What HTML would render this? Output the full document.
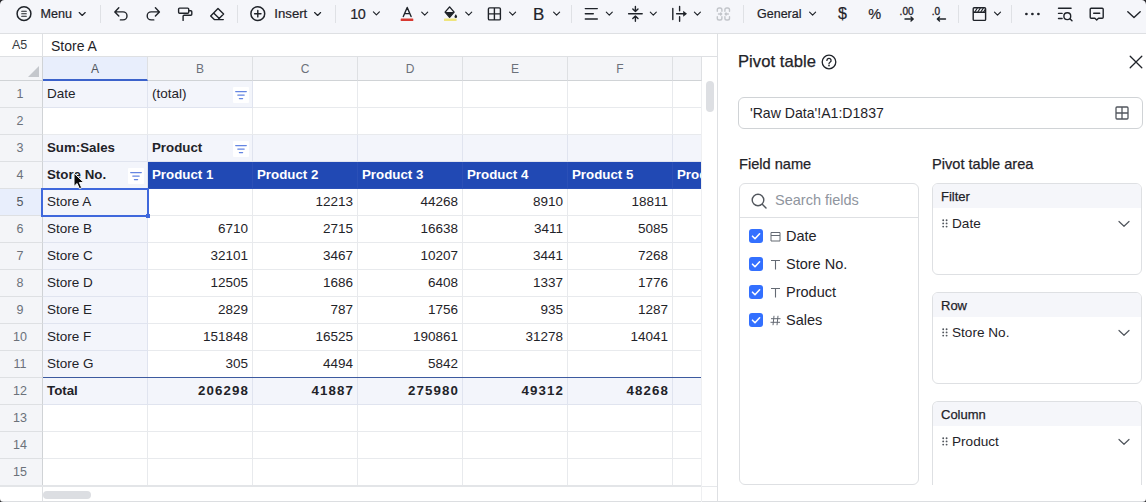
<!DOCTYPE html>
<html><head><meta charset="utf-8"><title>Pivot table</title>
<style>
*{box-sizing:border-box;margin:0;padding:0}
html,body{width:1146px;height:502px;overflow:hidden;background:#fff}
body{font-family:"Liberation Sans",sans-serif;color:#1f2329;position:relative}
#tb{position:absolute;left:0;top:0;width:1146px;height:34px;background:#f5f6fa;border-bottom:1px solid #dee0e3}
#tb svg{position:absolute;overflow:visible}
#tb .t{position:absolute;top:0;height:28px;line-height:28px;font-size:13.5px;color:#1f2329;white-space:nowrap;-webkit-text-stroke:0.200px #1f2329}
#tb .sep{position:absolute;top:5px;width:1px;height:18px;background:#dfe1e5}
.chev{stroke:#1f2329;stroke-width:1.150;fill:none;stroke-linecap:round;stroke-linejoin:round}
.ic{stroke:#1f2329;stroke-width:1.4;fill:none;stroke-linecap:round;stroke-linejoin:round}
#fx{position:absolute;left:0;top:34px;width:717px;height:23px;background:#fff;border-bottom:1px solid #dee0e3}
#fx .nm{position:absolute;left:0;top:0;width:42px;height:22px;line-height:22px;font-size:12.500px;color:#373c43;padding-left:12px}
#fx .vl{position:absolute;left:42px;top:0;width:1px;height:22px;background:#dee0e3}
#fx .tx{position:absolute;left:51px;top:0;height:22px;line-height:24px;font-size:14px;color:#1f2329}
#grid{position:absolute;left:0;top:0;width:702px;height:486px;overflow:hidden}
.ch{position:absolute;top:57px;height:24px;background:#f4f5f8;border-right:1px solid #dee0e3;border-bottom:1px solid #d0d3d6;font-size:12px;color:#6b717a;text-align:center;line-height:25px}
.ch.sel{background:#e8eefc;border-bottom:2px solid #3b62cb;color:#51565d}
.rh{position:absolute;left:0;width:43px;height:27px;background:#f4f5f8;border-right:1px solid #d0d3d6;border-bottom:1px solid #dee0e3;font-size:12.500px;color:#6b717a;text-align:center;line-height:27px;padding-right:2px}
.rh.sel{background:#e8eefc;color:#51565d}
.c{position:absolute;height:27px;border-right:1px solid #e8eaed;border-bottom:1px solid #e8eaed;font-size:13.5px;line-height:26px;padding:0 4px;white-space:nowrap;overflow:hidden;background:#fff;color:#1f2329}
.c.r{text-align:right;padding-right:4px}
.c.pv{background:#f3f5fb;border-color:#e0e4ef}
.c.b{font-weight:bold;font-size:13.300px}
.c.b.r{letter-spacing:1.100px;padding-right:3px}
.c.hd{background:#2149b4;color:#fff;font-weight:bold;font-size:13.300px;border-color:#2b50b7}
.corner{position:absolute;left:0;top:57px;width:43px;height:24px;background:#f4f5f8;border-right:1px solid #d0d3d6;border-bottom:1px solid #d0d3d6}
.corner i{position:absolute;left:27.500px;top:9px;width:0;height:0;border-left:11.500px solid transparent;border-bottom:11.500px solid #c4c7cc}
.selbox{position:absolute;left:41px;top:188px;width:108px;height:29px;border:2px solid #3f68dc}
.selh{position:absolute;left:146px;top:214px;width:4px;height:4px;background:#3f68dc;box-sizing:content-box}
.totline{position:absolute;left:43px;top:377px;width:659px;height:1px;background:#3c5a9f}
.fic{position:absolute;width:16px;height:16px;background:#fff;border-radius:1px}
.fic svg{position:absolute;left:0;top:0}
#vs{position:absolute;left:701px;top:81px;width:16px;height:421px;background:#fff;border-left:1px solid #eeeff1}
#vs i{position:absolute;left:4px;top:0;width:8px;height:31px;border-radius:4px;background:#dddfe3}
#hs{position:absolute;left:0;top:485px;width:701px;height:17px;background:#fff;border-top:2px solid #e3e5e8;border-bottom:1px solid #dcdee1}
#hs b{position:absolute;left:42px;top:0;width:1px;height:14px;background:#dee0e3}
#hs i{position:absolute;left:43px;top:4px;width:48px;height:8px;border-radius:4px;background:#dcdee2}
#pn{position:absolute;left:717px;top:34px;width:429px;height:468px;background:#fff;border-left:1px solid #dee0e3}
#pn .ttl{position:absolute;left:20px;top:17px;font-size:16.600px;line-height:22px;color:#1f2329;-webkit-text-stroke:0.250px #1f2329;letter-spacing:0.050px}
#pn .inp{position:absolute;left:20px;top:63px;width:405px;height:32px;border:1px solid #d0d3d6;border-radius:6px;font-size:14.100px;line-height:30px;padding-left:11px;color:#1f2329}
#pn .h{position:absolute;top:119px;font-size:14.600px;line-height:22px;color:#1f2329;-webkit-text-stroke:0.250px #1f2329}
.fbox{position:absolute;left:21px;top:149px;width:180px;height:302px;border:1px solid #dee0e3;border-radius:6px}
.fbox .srch{position:absolute;left:0;top:0;width:178px;height:34px;border-bottom:1px solid #dee0e3;font-size:14.500px;line-height:33px;color:#8f959e;padding-left:35px}
.fi{position:absolute;left:0;width:178px;height:28px;font-size:14.500px;line-height:28px;color:#1f2329;padding-left:46px}
.cb{position:absolute;left:9px;top:7px;width:14px;height:14px;border-radius:3px;background:#3370ff}
.cb svg{position:absolute;left:0;top:0}
.abox{position:absolute;left:214px;width:210px;height:92px;border:1px solid #dee0e3;border-radius:6px;overflow:hidden}
.abox .ah{position:absolute;left:0;top:0;width:208px;height:24px;background:#f5f6fa;font-size:13px;line-height:25px;padding-left:8px;color:#1f2329;-webkit-text-stroke:0.250px #1f2329}
.abox .ai{position:absolute;left:19px;top:28.500px;font-size:13.600px;line-height:22px;color:#1f2329}
.abox svg{position:absolute}
</style></head><body>
<div id="tb">
<svg width="1146" height="34" viewBox="0 0 1146 34" style="left:0;top:0">
<!-- menu -->
<g class="ic"><circle cx="24" cy="13.700" r="6.900" stroke-width="1.500"/><path d="M21.700 11.300h4.600M21.700 13.800h4.600M21.700 16.200h4.600" stroke-width="1.100"/></g>
<path class="chev" d="M79 12.3m.2.200l3 3 3-3"/>
<!-- undo -->
<path class="ic" d="M118.8 7.700l-4 4.200 4 4.200M115 11.900h8a4 4 0 0 1 0 8h-2.600"/>
<!-- redo -->
<path class="ic" d="M155.400 7.700l4 4.200-4 4.200M159.200 11.900h-8a4 4 0 0 0 0 8h2.600"/>
<!-- paint format -->
<path class="ic" d="M179.600 8.100h8.100a1 1 0 0 1 1 1v3.100a1 1 0 0 1-1 1h-8.100a1 1 0 0 1-1-1v-3.100a1 1 0 0 1 1-1zM188.700 10.700h2.100a1 1 0 0 1 1 1v2.500a1 1 0 0 1-1 1h-6.700a1 1 0 0 0-1 1v4.200"/>
<!-- eraser -->
<path class="ic" d="M218 8.500l5.600 5.500-5.500 5.600h-3.800l-3.600-3.600zM213.600 12.900l5.700 5.600M214.300 19.600h9"/>
<!-- insert -->
<g class="ic"><circle cx="257.800" cy="13.700" r="6.900" stroke-width="1.500"/><path d="M254.6 13.7h6.4M257.8 10.5v6.4"/></g>
<path class="chev" d="M314.4 12.3m.2.200l3 3 3-3"/>
<path class="chev" d="M373.2 11.6m.2.200l3 3 3-3"/>
<!-- font colour -->
<path class="ic" d="M403.3 16.6l3.9-9.2 3.9 9.2M404.6 13.6h5.2" stroke-width="1.3"/>
<rect x="400.7" y="18.4" width="12.6" height="2.6" rx="0.6" fill="#d83931"/>
<path class="chev" d="M421.5 12m.2.200l3 3 3-3"/>
<!-- fill -->
<path class="ic" d="M449.600 6.900l4.500 5.200-4.500 5.200-4.500-5.200z" stroke-width="1.300"/><path d="M445.300 12.100h8.600l-4.300 5z" fill="#1f2329"/><path d="M455.800 14.200c.9 1.200 1.300 1.900 1.300 2.500a1.300 1.300 0 0 1-2.600 0c0-.6.400-1.300 1.300-2.500z" fill="#1f2329"/>
<rect x="444" y="18.4" width="12.6" height="2.6" rx="0.6" fill="#efe57e"/>
<path class="chev" d="M465.5 12m.2.200l3 3 3-3"/>
<!-- borders -->
<path class="ic" d="M489.600 7.900h9.600a1.200 1.200 0 0 1 1.200 1.200v9.600a1.200 1.200 0 0 1-1.200 1.200h-9.600a1.200 1.200 0 0 1-1.200-1.200v-9.600a1.200 1.200 0 0 1 1.200-1.200zM494.400 7.900v12M488.400 13.900h12" stroke-width="1.3"/>
<path class="chev" d="M509.400 12m.2.200l3 3 3-3"/>
<path class="chev" d="M553.400 12m.2.200l3 3 3-3"/>
<!-- align -->
<path class="ic" d="M585.300 8.600h12M585.300 13.800h8M585.300 19h12"/>
<path class="chev" d="M606.100 12m.2.200l3 3 3-3"/>
<!-- valign -->
<path class="ic" d="M628.600 13.800h13.600M635.400 6.400v5.200M632.800 9l2.600 2.600 2.600-2.600M635.400 21.200v-5.200M632.800 18.600l2.600-2.600 2.600 2.600" stroke-width="1.3"/>
<path class="chev" d="M650.100 12m.2.200l3 3 3-3"/>
<!-- wrap -->
<path class="ic" d="M672.800 8.400v11.200M679.600 6.400v4.400M679.600 16.800v4.400M676.600 13.800h8" stroke-width="1.3"/><path d="M683.200 10.800l3.800 3-3.800 3z" fill="#1f2329"/>
<path class="chev" d="M694.200 12m.2.200l3 3 3-3"/>
<!-- merge disabled -->
<g fill="none" stroke="#c2c5ca" stroke-width="1.400" stroke-linecap="round" stroke-linejoin="round"><path d="M717.300 11.300v-1.500a1.800 1.800 0 0 1 1.800-1.800h1a1.800 1.800 0 0 1 1.800 1.800v1.500M724.900 11.300v-1.500a1.800 1.800 0 0 1 1.800-1.800h1a1.800 1.800 0 0 1 1.800 1.800v1.500M717.300 16.700v1.500a1.800 1.800 0 0 0 1.800 1.800h1a1.800 1.800 0 0 0 1.800-1.800v-1.500M724.900 16.700v1.500a1.800 1.800 0 0 0 1.800 1.800h1a1.800 1.800 0 0 0 1.800-1.800v-1.500M718.500 14h3.200M728.300 14h-3.200M720.700 13l1 1-1 1M726.100 13l-1 1 1 1" /></g>
<path class="chev" d="M809.400 12m.2.200l3 3 3-3"/>
<!-- decimal arrows -->
<path class="ic" d="M905 19h8M911 17l2.200 2-2.200 2" stroke-width="1.500"/>
<path class="ic" d="M945.500 19h-8M939.500 17l-2.200 2 2.200 2" stroke-width="1.500"/>
<!-- format -->
<path class="ic" d="M974.200 7.800h10.400a1 1 0 0 1 1 1v10.600a1 1 0 0 1-1 1h-10.400a1 1 0 0 1-1-1v-10.600a1 1 0 0 1 1-1zM973.200 12.300h12.400" stroke-width="1.300"/>
<path d="M974.800 12l2.600-4M977.800 12l2.600-4M980.800 12l2.600-4M983.600 12l1.800-2.800" stroke="#1f2329" stroke-width="1.200" fill="none"/>
<path class="chev" d="M994.300 12m.2.200l3 3 3-3"/>
<!-- dots -->
<circle cx="1026.400" cy="14" r="1.350" fill="#1f2329"/><circle cx="1032.400" cy="14" r="1.350" fill="#1f2329"/><circle cx="1038.400" cy="14" r="1.350" fill="#1f2329"/>
<!-- find -->
<path class="ic" d="M1058.500 8.300h12.600M1058.500 13.400h3.600M1058.500 18.500h3.600M1070.200 19l1.800 1.800" stroke-width="1.300"/><circle class="ic" cx="1067.300" cy="16.200" r="3.400" stroke-width="1.300"/>
<!-- comment -->
<path class="ic" d="M1091.200 8.300h11a1 1 0 0 1 1 1v8a1 1 0 0 1-1 1h-3.700l-1.800 1.700-1.800-1.700h-3.700a1 1 0 0 1-1-1v-8a1 1 0 0 1 1-1zM1093.700 13.300h6" stroke-width="1.300"/>
<!-- chevron big -->
<path class="ic" d="M1127.800 11.800l6.200 5.800 6.200-5.800" stroke-width="1.300"/>
</svg>
<div class="t" style="left:40.500px;font-size:12.600px;top:0px">Menu</div>
<div class="t" style="left:274.300px;font-size:13.200px;top:0px">Insert</div>
<div class="t" style="left:350.300px;font-size:14.400px;letter-spacing:-0.600px;top:0px">10</div>
<div class="t" style="left:533px;font-size:17px;top:1px">B</div>
<div class="t" style="left:757px;font-size:12.500px;top:0px">General</div>
<div class="t" style="left:838px;font-size:16px;top:0">$</div>
<div class="t" style="left:868.300px;font-size:14.500px;top:0px">%</div>
<div class="t" style="left:899.500px;font-size:10px;top:-2.500px;letter-spacing:0.100px;-webkit-text-stroke:0.300px #1f2329">.00</div>
<div class="t" style="left:931.800px;font-size:10px;top:-2.500px;-webkit-text-stroke:0.300px #1f2329">.0</div>
<div class="sep" style="left:100px"></div>
<div class="sep" style="left:237px"></div>
<div class="sep" style="left:335px"></div>
<div class="sep" style="left:571px"></div>
<div class="sep" style="left:743px"></div>
<div class="sep" style="left:958px"></div>
<div class="sep" style="left:1011px"></div>
</div>
<div id="fx"><div class="nm">A5</div><div class="vl"></div><div class="tx">Store A</div></div>
<div id="grid">
<div class="corner"><i></i></div>
<div class="ch sel" style="left:43px;width:105px">A</div>
<div class="ch" style="left:148px;width:105px">B</div>
<div class="ch" style="left:253px;width:105px">C</div>
<div class="ch" style="left:358px;width:105px">D</div>
<div class="ch" style="left:463px;width:105px">E</div>
<div class="ch" style="left:568px;width:105px">F</div>
<div class="ch" style="left:673px;width:29px"></div>
<div class="rh" style="top:81px">1</div>
<div class="c pv" style="left:43px;top:81px;width:105px">Date</div>
<div class="c pv" style="left:148px;top:81px;width:105px">(total)</div>
<div class="c" style="left:253px;top:81px;width:105px"></div>
<div class="c" style="left:358px;top:81px;width:105px"></div>
<div class="c" style="left:463px;top:81px;width:105px"></div>
<div class="c" style="left:568px;top:81px;width:105px"></div>
<div class="c" style="left:673px;top:81px;width:29px"></div>
<div class="rh" style="top:108px">2</div>
<div class="c" style="left:43px;top:108px;width:105px"></div>
<div class="c" style="left:148px;top:108px;width:105px"></div>
<div class="c" style="left:253px;top:108px;width:105px"></div>
<div class="c" style="left:358px;top:108px;width:105px"></div>
<div class="c" style="left:463px;top:108px;width:105px"></div>
<div class="c" style="left:568px;top:108px;width:105px"></div>
<div class="c" style="left:673px;top:108px;width:29px"></div>
<div class="rh" style="top:135px">3</div>
<div class="c pv b" style="left:43px;top:135px;width:105px">Sum:Sales</div>
<div class="c pv b" style="left:148px;top:135px;width:105px">Product</div>
<div class="c pv" style="left:253px;top:135px;width:105px"></div>
<div class="c pv" style="left:358px;top:135px;width:105px"></div>
<div class="c pv" style="left:463px;top:135px;width:105px"></div>
<div class="c pv" style="left:568px;top:135px;width:105px"></div>
<div class="c pv" style="left:673px;top:135px;width:29px"></div>
<div class="rh" style="top:162px">4</div>
<div class="c pv b" style="left:43px;top:162px;width:105px">Store No.</div>
<div class="c hd" style="left:148px;top:162px;width:105px">Product 1</div>
<div class="c hd" style="left:253px;top:162px;width:105px">Product 2</div>
<div class="c hd" style="left:358px;top:162px;width:105px">Product 3</div>
<div class="c hd" style="left:463px;top:162px;width:105px">Product 4</div>
<div class="c hd" style="left:568px;top:162px;width:105px">Product 5</div>
<div class="c hd" style="left:673px;top:162px;width:29px">Product 6</div>
<div class="rh sel" style="top:189px">5</div>
<div class="c pv" style="left:43px;top:189px;width:105px">Store A</div>
<div class="c r" style="left:148px;top:189px;width:105px"></div>
<div class="c r" style="left:253px;top:189px;width:105px">12213</div>
<div class="c r" style="left:358px;top:189px;width:105px">44268</div>
<div class="c r" style="left:463px;top:189px;width:105px">8910</div>
<div class="c r" style="left:568px;top:189px;width:105px">18811</div>
<div class="c r" style="left:673px;top:189px;width:29px"></div>
<div class="rh" style="top:216px">6</div>
<div class="c pv" style="left:43px;top:216px;width:105px">Store B</div>
<div class="c r" style="left:148px;top:216px;width:105px">6710</div>
<div class="c r" style="left:253px;top:216px;width:105px">2715</div>
<div class="c r" style="left:358px;top:216px;width:105px">16638</div>
<div class="c r" style="left:463px;top:216px;width:105px">3411</div>
<div class="c r" style="left:568px;top:216px;width:105px">5085</div>
<div class="c r" style="left:673px;top:216px;width:29px"></div>
<div class="rh" style="top:243px">7</div>
<div class="c pv" style="left:43px;top:243px;width:105px">Store C</div>
<div class="c r" style="left:148px;top:243px;width:105px">32101</div>
<div class="c r" style="left:253px;top:243px;width:105px">3467</div>
<div class="c r" style="left:358px;top:243px;width:105px">10207</div>
<div class="c r" style="left:463px;top:243px;width:105px">3441</div>
<div class="c r" style="left:568px;top:243px;width:105px">7268</div>
<div class="c r" style="left:673px;top:243px;width:29px"></div>
<div class="rh" style="top:270px">8</div>
<div class="c pv" style="left:43px;top:270px;width:105px">Store D</div>
<div class="c r" style="left:148px;top:270px;width:105px">12505</div>
<div class="c r" style="left:253px;top:270px;width:105px">1686</div>
<div class="c r" style="left:358px;top:270px;width:105px">6408</div>
<div class="c r" style="left:463px;top:270px;width:105px">1337</div>
<div class="c r" style="left:568px;top:270px;width:105px">1776</div>
<div class="c r" style="left:673px;top:270px;width:29px"></div>
<div class="rh" style="top:297px">9</div>
<div class="c pv" style="left:43px;top:297px;width:105px">Store E</div>
<div class="c r" style="left:148px;top:297px;width:105px">2829</div>
<div class="c r" style="left:253px;top:297px;width:105px">787</div>
<div class="c r" style="left:358px;top:297px;width:105px">1756</div>
<div class="c r" style="left:463px;top:297px;width:105px">935</div>
<div class="c r" style="left:568px;top:297px;width:105px">1287</div>
<div class="c r" style="left:673px;top:297px;width:29px"></div>
<div class="rh" style="top:324px">10</div>
<div class="c pv" style="left:43px;top:324px;width:105px">Store F</div>
<div class="c r" style="left:148px;top:324px;width:105px">151848</div>
<div class="c r" style="left:253px;top:324px;width:105px">16525</div>
<div class="c r" style="left:358px;top:324px;width:105px">190861</div>
<div class="c r" style="left:463px;top:324px;width:105px">31278</div>
<div class="c r" style="left:568px;top:324px;width:105px">14041</div>
<div class="c r" style="left:673px;top:324px;width:29px"></div>
<div class="rh" style="top:351px">11</div>
<div class="c pv" style="left:43px;top:351px;width:105px">Store G</div>
<div class="c r" style="left:148px;top:351px;width:105px">305</div>
<div class="c r" style="left:253px;top:351px;width:105px">4494</div>
<div class="c r" style="left:358px;top:351px;width:105px">5842</div>
<div class="c r" style="left:463px;top:351px;width:105px"></div>
<div class="c r" style="left:568px;top:351px;width:105px"></div>
<div class="c r" style="left:673px;top:351px;width:29px"></div>
<div class="rh" style="top:378px">12</div>
<div class="c pv b" style="left:43px;top:378px;width:105px">Total</div>
<div class="c pv b r" style="left:148px;top:378px;width:105px">206298</div>
<div class="c pv b r" style="left:253px;top:378px;width:105px">41887</div>
<div class="c pv b r" style="left:358px;top:378px;width:105px">275980</div>
<div class="c pv b r" style="left:463px;top:378px;width:105px">49312</div>
<div class="c pv b r" style="left:568px;top:378px;width:105px">48268</div>
<div class="c pv b r" style="left:673px;top:378px;width:29px"></div>
<div class="rh" style="top:405px">13</div>
<div class="c" style="left:43px;top:405px;width:105px"></div>
<div class="c r" style="left:148px;top:405px;width:105px"></div>
<div class="c r" style="left:253px;top:405px;width:105px"></div>
<div class="c r" style="left:358px;top:405px;width:105px"></div>
<div class="c r" style="left:463px;top:405px;width:105px"></div>
<div class="c r" style="left:568px;top:405px;width:105px"></div>
<div class="c r" style="left:673px;top:405px;width:29px"></div>
<div class="rh" style="top:432px">14</div>
<div class="c" style="left:43px;top:432px;width:105px"></div>
<div class="c r" style="left:148px;top:432px;width:105px"></div>
<div class="c r" style="left:253px;top:432px;width:105px"></div>
<div class="c r" style="left:358px;top:432px;width:105px"></div>
<div class="c r" style="left:463px;top:432px;width:105px"></div>
<div class="c r" style="left:568px;top:432px;width:105px"></div>
<div class="c r" style="left:673px;top:432px;width:29px"></div>
<div class="rh" style="top:459px">15</div>
<div class="c" style="left:43px;top:459px;width:105px"></div>
<div class="c r" style="left:148px;top:459px;width:105px"></div>
<div class="c r" style="left:253px;top:459px;width:105px"></div>
<div class="c r" style="left:358px;top:459px;width:105px"></div>
<div class="c r" style="left:463px;top:459px;width:105px"></div>
<div class="c r" style="left:568px;top:459px;width:105px"></div>
<div class="c r" style="left:673px;top:459px;width:29px"></div><div class="totline"></div>
<div class="selbox"></div><div class="selh"></div>
<div class="fic" style="left:233px;top:87px"><svg width="16" height="16" viewBox="0 0 16 16"><path d="M2.700 4.500h10.600M4.800 8h6.400M6.400 11.500h3.200" stroke="#6485e2" stroke-width="1.250" fill="none" stroke-linecap="round"/></svg></div>
<div class="fic" style="left:233px;top:141px"><svg width="16" height="16" viewBox="0 0 16 16"><path d="M2.700 4.500h10.600M4.800 8h6.400M6.400 11.500h3.200" stroke="#6485e2" stroke-width="1.250" fill="none" stroke-linecap="round"/></svg></div>
<div class="fic" style="left:128px;top:168px"><svg width="16" height="16" viewBox="0 0 16 16"><path d="M2.700 4.500h10.600M4.800 8h6.400M6.400 11.500h3.200" stroke="#6485e2" stroke-width="1.250" fill="none" stroke-linecap="round"/></svg></div>
<svg style="position:absolute;left:72px;top:172px" width="14" height="18" viewBox="0 0 14 18"><path d="M2 1.200v13.200l3.100-2.900 2.300 5.200 2.300-1-2.300-5.100h4.500z" fill="#0b0b0b" stroke="#fff" stroke-width="1" stroke-linejoin="round"/></svg>
</div>
<div id="vs"><i></i></div>
<div id="hs"><b></b><i></i></div>
<div style="position:absolute;left:702px;top:486px;width:15px;height:1px;background:#e6e8eb"></div>
<div style="position:absolute;left:702px;top:501px;width:444px;height:1px;background:#dcdee1;z-index:5"></div>
<div id="pn">
<div class="ttl">Pivot table</div>
<svg style="position:absolute;left:103px;top:19.700px" width="16" height="16" viewBox="0 0 16 16"><circle cx="8" cy="8" r="6.800" fill="none" stroke="#1f2329" stroke-width="1.300"/><path d="M5.900 6.400a2.100 2.100 0 1 1 3.100 1.900c-.7.400-1 .8-1 1.500" fill="none" stroke="#1f2329" stroke-width="1.300" stroke-linecap="round"/><circle cx="8" cy="11.600" r=".850" fill="#1f2329"/></svg>
<svg style="position:absolute;left:411px;top:21px" width="14" height="14" viewBox="0 0 14 14"><path d="M1.200 1.200l11.600 11.600M12.800 1.200L1.200 12.800" stroke="#1f2329" stroke-width="1.300" stroke-linecap="round"/></svg>
<div class="inp">'Raw Data'!A1:D1837</div>
<svg style="position:absolute;left:397px;top:72px" width="14" height="14" viewBox="0 0 14 14"><path d="M2 1h10a1 1 0 0 1 1 1v10a1 1 0 0 1-1 1h-10a1 1 0 0 1-1-1v-10a1 1 0 0 1 1-1zM7 1v12M1 7h12" fill="none" stroke="#51565d" stroke-width="1.300" stroke-linejoin="round"/></svg>
<div class="h" style="left:21px">Field name</div>
<div class="h" style="left:214px">Pivot table area</div>
<div class="fbox">
<div class="srch">Search fields</div>
<svg style="position:absolute;left:10px;top:8px" width="18" height="18" viewBox="0 0 18 18"><circle cx="8" cy="8" r="5.800" fill="none" stroke="#51565d" stroke-width="1.400"/><path d="M12.500 12.500l3.500 3.500" stroke="#51565d" stroke-width="1.400" stroke-linecap="round"/></svg>
<div class="fi" style="top:38px"><span class="cb"><svg width="14" height="14" viewBox="0 0 14 14"><path d="M3.500 7.200l2.500 2.500 4.600-4.900" fill="none" stroke="#fff" stroke-width="1.600" stroke-linecap="round" stroke-linejoin="round"/></svg></span>Date</div>
<div class="fi" style="top:66px"><span class="cb"><svg width="14" height="14" viewBox="0 0 14 14"><path d="M3.500 7.200l2.500 2.500 4.600-4.900" fill="none" stroke="#fff" stroke-width="1.600" stroke-linecap="round" stroke-linejoin="round"/></svg></span>Store No.</div>
<div class="fi" style="top:94px"><span class="cb"><svg width="14" height="14" viewBox="0 0 14 14"><path d="M3.500 7.200l2.500 2.500 4.600-4.900" fill="none" stroke="#fff" stroke-width="1.600" stroke-linecap="round" stroke-linejoin="round"/></svg></span>Product</div>
<div class="fi" style="top:122px"><span class="cb"><svg width="14" height="14" viewBox="0 0 14 14"><path d="M3.500 7.200l2.500 2.500 4.600-4.900" fill="none" stroke="#fff" stroke-width="1.600" stroke-linecap="round" stroke-linejoin="round"/></svg></span>Sales</div>
<svg style="position:absolute;left:30px;top:47px" width="11" height="11" viewBox="0 0 11 11"><path d="M1 1.500h9v8.500H1zM1 4.500h9" fill="none" stroke="#646a73" stroke-width="1"/></svg>
<svg style="position:absolute;left:30px;top:75px" width="11" height="11" viewBox="0 0 11 11"><path d="M1 1.500h9M5.500 1.500v9" fill="none" stroke="#646a73" stroke-width="1.100"/></svg>
<svg style="position:absolute;left:30px;top:103px" width="11" height="11" viewBox="0 0 11 11"><path d="M1 1.500h9M5.500 1.500v9" fill="none" stroke="#646a73" stroke-width="1.100"/></svg>
<svg style="position:absolute;left:30px;top:131px" width="11" height="11" viewBox="0 0 11 11"><path d="M4 .8l-1 9.400M8 .8l-1 9.400M1 3.700h9.500M.5 7.300h9.500" fill="none" stroke="#646a73" stroke-width="1"/></svg>
</div>
<div class="abox" style="top:149px"><div class="ah">Filter</div><div class="ai">Date</div>
<svg style="left:9px;top:35px" width="6" height="10" viewBox="0 0 6 10"><g fill="#51565d"><circle cx="1.200" cy="1.200" r=".950"/><circle cx="4.600" cy="1.200" r=".950"/><circle cx="1.200" cy="4.400" r=".950"/><circle cx="4.600" cy="4.400" r=".950"/><circle cx="1.200" cy="7.600" r=".950"/><circle cx="4.600" cy="7.600" r=".950"/></g></svg>
<svg style="left:185px;top:36px" width="12" height="8" viewBox="0 0 12 8"><path d="M1 1.500l5 4.800 5-4.800" fill="none" stroke="#51565d" stroke-width="1.200" stroke-linecap="round" stroke-linejoin="round"/></svg></div>
<div class="abox" style="top:258px"><div class="ah">Row</div><div class="ai">Store No.</div>
<svg style="left:9px;top:35px" width="6" height="10" viewBox="0 0 6 10"><g fill="#51565d"><circle cx="1.200" cy="1.200" r=".950"/><circle cx="4.600" cy="1.200" r=".950"/><circle cx="1.200" cy="4.400" r=".950"/><circle cx="4.600" cy="4.400" r=".950"/><circle cx="1.200" cy="7.600" r=".950"/><circle cx="4.600" cy="7.600" r=".950"/></g></svg>
<svg style="left:185px;top:36px" width="12" height="8" viewBox="0 0 12 8"><path d="M1 1.500l5 4.800 5-4.800" fill="none" stroke="#51565d" stroke-width="1.200" stroke-linecap="round" stroke-linejoin="round"/></svg></div>
<div class="abox" style="top:367px;height:84px;border-bottom:0;border-radius:6px 6px 0 0"><div class="ah">Column</div><div class="ai">Product</div>
<svg style="left:9px;top:35px" width="6" height="10" viewBox="0 0 6 10"><g fill="#51565d"><circle cx="1.200" cy="1.200" r=".950"/><circle cx="4.600" cy="1.200" r=".950"/><circle cx="1.200" cy="4.400" r=".950"/><circle cx="4.600" cy="4.400" r=".950"/><circle cx="1.200" cy="7.600" r=".950"/><circle cx="4.600" cy="7.600" r=".950"/></g></svg>
<svg style="left:185px;top:36px" width="12" height="8" viewBox="0 0 12 8"><path d="M1 1.500l5 4.800 5-4.800" fill="none" stroke="#51565d" stroke-width="1.200" stroke-linecap="round" stroke-linejoin="round"/></svg></div>
</div>

<svg style="position:absolute;left:0;top:0;z-index:9" width="5" height="5"><path d="M0 0h4.500A4.500 4.500 0 0 0 0 4.500z" fill="#2a2a2e"/></svg>
<svg style="position:absolute;left:1141px;top:0;z-index:9" width="5" height="5"><path d="M5 0h-4.500A4.500 4.500 0 0 1 5 4.500z" fill="#2a2a2e"/></svg>
<svg style="position:absolute;left:0;top:497px;z-index:9" width="5" height="5"><path d="M0 5h3.500A3.500 3.500 0 0 1 0 1.500z" fill="#2a2a2e"/></svg>
<svg style="position:absolute;left:1141px;top:497px;z-index:9" width="5" height="5"><path d="M5 5h-3.500A3.500 3.500 0 0 0 5 1.500z" fill="#2a2a2e"/></svg>
</body></html>
